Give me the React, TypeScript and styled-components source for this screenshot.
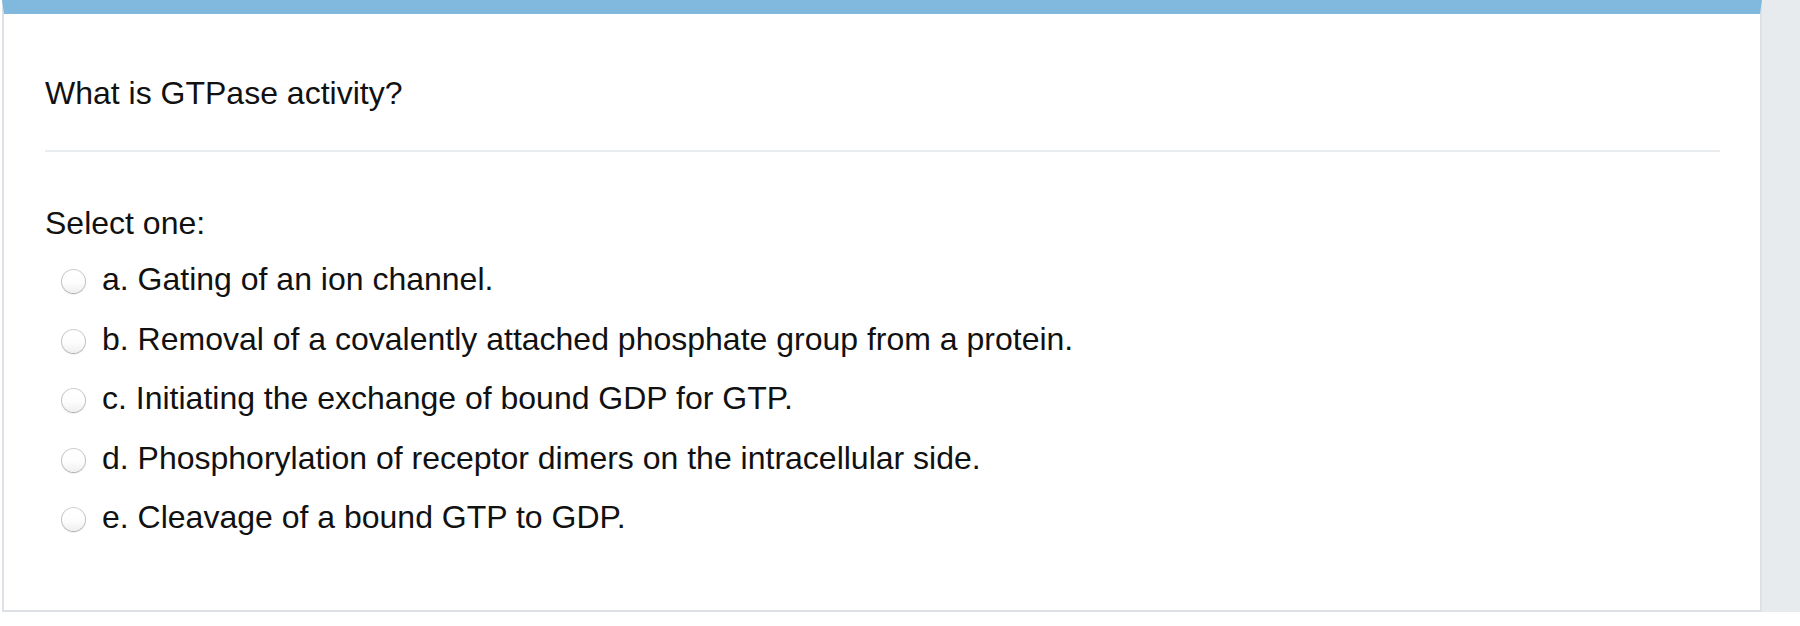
import React from "react";
import styled, { createGlobalStyle } from "styled-components";

const GlobalStyle = createGlobalStyle`
  html, body {
    margin: 0;
    padding: 0;
    background: #ffffff;
  }
  body {
    font-family: "Liberation Sans", Arial, Helvetica, sans-serif;
    color: #111111;
  }
`;

const Page = styled.div`
  display: flex;
  align-items: stretch;
  width: 1800px;
`;

const Panel = styled.section`
  box-sizing: border-box;
  width: 1760px;
  margin-left: 2px;
  background: #ffffff;
  border-top: 14px solid #81b8de;
  border-left: 2px solid #dde1e5;
  border-right: 2px solid #dde1e5;
  border-bottom: 2px solid #dde1e5;
  padding: 61px 40px 74px 41px;
`;

const Sidebar = styled.aside`
  flex: 1;
  background: #e7ebee;
`;

const QuestionText = styled.p`
  margin: 0;
  font-size: 32px;
  line-height: 37px;
`;

const Divider = styled.hr`
  margin: 38px 0 53px 0;
  border: none;
  height: 2px;
  background: #e9ecef;
`;

const Prompt = styled.div`
  font-size: 32px;
  line-height: 37px;
  margin-bottom: 19px;
`;

const OptionList = styled.div`
  display: flex;
  flex-direction: column;
  gap: 22.5px;
`;

const OptionRow = styled.label`
  display: flex;
  align-items: flex-start;
  font-size: 32px;
  line-height: 37px;
  padding-left: 16px;
  cursor: pointer;
`;

const Radio = styled.span`
  box-sizing: border-box;
  flex: none;
  width: 25px;
  height: 25px;
  margin-top: 8px;
  margin-right: 16px;
  border-radius: 50%;
  border: 1px solid #c2c2c2;
  border-top-color: #cfcfcf;
  border-bottom-color: #b0b0b0;
  background: linear-gradient(#ffffff 0%, #fdfdfd 55%, #efefef 100%);
  box-shadow: 0 1px 1px rgba(0, 0, 0, 0.06);
`;

const OptionText = styled.span``;

const options = [
  "a. Gating of an ion channel.",
  "b. Removal of a covalently attached phosphate group from a protein.",
  "c. Initiating the exchange of bound GDP for GTP.",
  "d. Phosphorylation of receptor dimers on the intracellular side.",
  "e. Cleavage of a bound GTP to GDP.",
];

export default function App() {
  return (
    <>
      <GlobalStyle />
      <Page>
        <Panel>
          <QuestionText>What is GTPase activity?</QuestionText>
          <Divider />
          <Prompt>Select one:</Prompt>
          <OptionList>
            {options.map((o) => (
              <OptionRow key={o}>
                <Radio />
                <OptionText>{o}</OptionText>
              </OptionRow>
            ))}
          </OptionList>
        </Panel>
        <Sidebar />
      </Page>
    </>
  );
}
